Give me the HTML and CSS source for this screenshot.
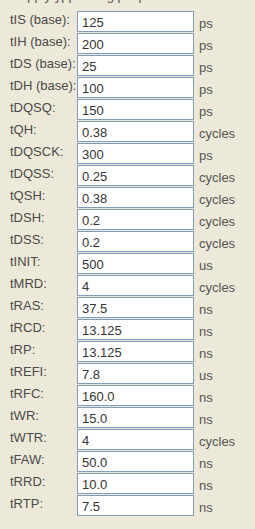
FILE: index.html
```html
<!DOCTYPE html>
<html lang="en">
<head>
<meta charset="UTF-8">
<title>Timing Parameters</title>
<link rel="stylesheet" href="styles.css">
</head>
<body>
<div class="panel">
    <div class="caption"><span class="caption-text">apply ypp timing p s p</span></div>

    <div class="param-row"><span class="param-label">tIS (base):</span><input class="param-input" value="125"><span class="param-unit">ps</span></div>
    <div class="param-row"><span class="param-label">tIH (base):</span><input class="param-input" value="200"><span class="param-unit">ps</span></div>
    <div class="param-row"><span class="param-label">tDS (base):</span><input class="param-input" value="25"><span class="param-unit">ps</span></div>
    <div class="param-row"><span class="param-label">tDH (base):</span><input class="param-input" value="100"><span class="param-unit">ps</span></div>
    <div class="param-row"><span class="param-label">tDQSQ:</span><input class="param-input" value="150"><span class="param-unit">ps</span></div>
    <div class="param-row"><span class="param-label">tQH:</span><input class="param-input" value="0.38"><span class="param-unit">cycles</span></div>
    <div class="param-row"><span class="param-label">tDQSCK:</span><input class="param-input" value="300"><span class="param-unit">ps</span></div>
    <div class="param-row"><span class="param-label">tDQSS:</span><input class="param-input" value="0.25"><span class="param-unit">cycles</span></div>
    <div class="param-row"><span class="param-label">tQSH:</span><input class="param-input" value="0.38"><span class="param-unit">cycles</span></div>
    <div class="param-row"><span class="param-label">tDSH:</span><input class="param-input" value="0.2"><span class="param-unit">cycles</span></div>
    <div class="param-row"><span class="param-label">tDSS:</span><input class="param-input" value="0.2"><span class="param-unit">cycles</span></div>
    <div class="param-row"><span class="param-label">tINIT:</span><input class="param-input" value="500"><span class="param-unit">us</span></div>
    <div class="param-row"><span class="param-label">tMRD:</span><input class="param-input" value="4"><span class="param-unit">cycles</span></div>
    <div class="param-row"><span class="param-label">tRAS:</span><input class="param-input" value="37.5"><span class="param-unit">ns</span></div>
    <div class="param-row"><span class="param-label">tRCD:</span><input class="param-input" value="13.125"><span class="param-unit">ns</span></div>
    <div class="param-row"><span class="param-label">tRP:</span><input class="param-input" value="13.125"><span class="param-unit">ns</span></div>
    <div class="param-row"><span class="param-label">tREFI:</span><input class="param-input" value="7.8"><span class="param-unit">us</span></div>
    <div class="param-row"><span class="param-label">tRFC:</span><input class="param-input" value="160.0"><span class="param-unit">ns</span></div>
    <div class="param-row"><span class="param-label">tWR:</span><input class="param-input" value="15.0"><span class="param-unit">ns</span></div>
    <div class="param-row"><span class="param-label">tWTR:</span><input class="param-input" value="4"><span class="param-unit">cycles</span></div>
    <div class="param-row"><span class="param-label">tFAW:</span><input class="param-input" value="50.0"><span class="param-unit">ns</span></div>
    <div class="param-row"><span class="param-label">tRRD:</span><input class="param-input" value="10.0"><span class="param-unit">ns</span></div>
    <div class="param-row"><span class="param-label">tRTP:</span><input class="param-input" value="7.5"><span class="param-unit">ns</span></div>
</div>
</body>
</html>
```

FILE: styles.css
```css
body, html {
    margin: 0;
    padding: 0;
    height: 100%;
    background-color: #ece9d8;
    font-family: 'Liberation Sans', Arial, sans-serif;
    font-size: 13px;
    color: #333;
    overflow: hidden;
}

.panel {
    display: flex;
    flex-direction: column;
    gap: 1px;
    padding-left: 10px;
}

/* only the descenders of the scrolled-off caption are visible */
.caption {
    height: 4px;
    margin-bottom: 6px;
    overflow: hidden;
    white-space: nowrap;
    color: #555;
}

.caption-text {
    display: block;
    line-height: 14px;
    margin-top: -11px;
    padding-left: 10px;
}

.param-row {
    display: flex;
    align-items: center;
    height: 21px;
}

.param-label {
    width: 67px;
    color: #4a4a4a;
    margin-top: -4px;
}

.param-input {
    box-sizing: border-box;
    width: 117px;
    height: 21px;
    margin: 0;
    padding: 1px 4px 0;
    border: 1px solid #7f9db9;
    background: white;
    font-family: 'Liberation Sans', Arial, sans-serif;
    font-size: 13px;
    color: #333;
    outline: none;
}

.param-unit {
    margin-left: 5px;
    margin-top: 4px;
    color: #555;
}
```
